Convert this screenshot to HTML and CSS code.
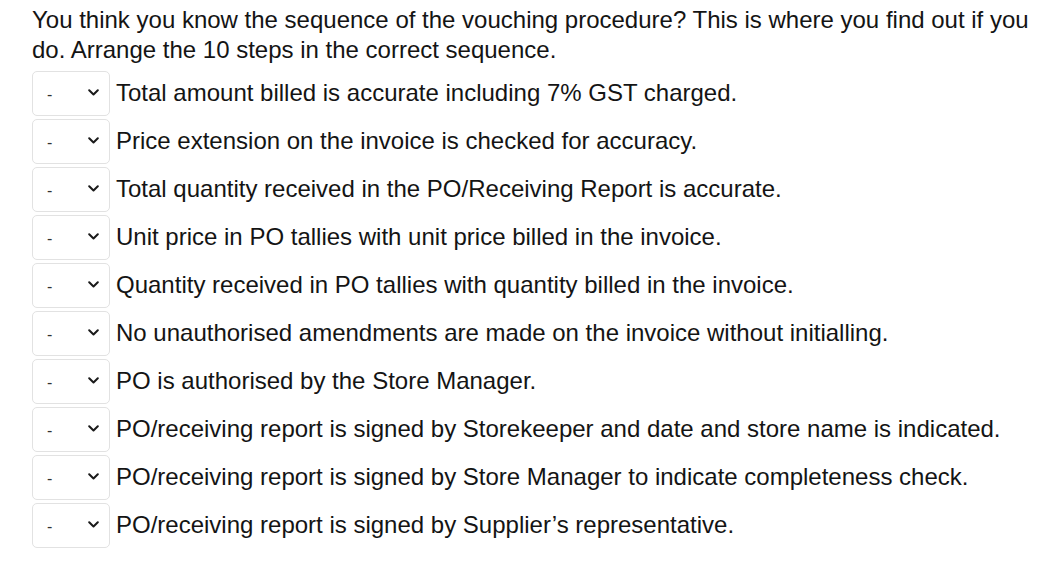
FILE: index.html
```html
<!DOCTYPE html>
<html>
<head>
<meta charset="utf-8">
<link rel="stylesheet" href="styles.css">
</head>
<body>
<div class="quiz">
  <p class="intro">You think you know the sequence of the vouching procedure? This is where you find out if you do. Arrange the 10 steps in the correct sequence.</p>
  <ul class="steps">
    <li class="step"><span class="select"><span class="dash">-</span><svg class="chev" viewBox="0 0 11 7"><path d="M1.2 1.2 L5.5 5.5 L9.8 1.2"/></svg></span><span class="label">Total amount billed is accurate including 7% GST charged.</span></li>
    <li class="step"><span class="select"><span class="dash">-</span><svg class="chev" viewBox="0 0 11 7"><path d="M1.2 1.2 L5.5 5.5 L9.8 1.2"/></svg></span><span class="label">Price extension on the invoice is checked for accuracy.</span></li>
    <li class="step"><span class="select"><span class="dash">-</span><svg class="chev" viewBox="0 0 11 7"><path d="M1.2 1.2 L5.5 5.5 L9.8 1.2"/></svg></span><span class="label">Total quantity received in the PO/Receiving Report is accurate.</span></li>
    <li class="step"><span class="select"><span class="dash">-</span><svg class="chev" viewBox="0 0 11 7"><path d="M1.2 1.2 L5.5 5.5 L9.8 1.2"/></svg></span><span class="label">Unit price in PO tallies with unit price billed in the invoice.</span></li>
    <li class="step"><span class="select"><span class="dash">-</span><svg class="chev" viewBox="0 0 11 7"><path d="M1.2 1.2 L5.5 5.5 L9.8 1.2"/></svg></span><span class="label">Quantity received in PO tallies with quantity billed in the invoice.</span></li>
    <li class="step"><span class="select"><span class="dash">-</span><svg class="chev" viewBox="0 0 11 7"><path d="M1.2 1.2 L5.5 5.5 L9.8 1.2"/></svg></span><span class="label">No unauthorised amendments are made on the invoice without initialling.</span></li>
    <li class="step"><span class="select"><span class="dash">-</span><svg class="chev" viewBox="0 0 11 7"><path d="M1.2 1.2 L5.5 5.5 L9.8 1.2"/></svg></span><span class="label">PO is authorised by the Store Manager.</span></li>
    <li class="step"><span class="select"><span class="dash">-</span><svg class="chev" viewBox="0 0 11 7"><path d="M1.2 1.2 L5.5 5.5 L9.8 1.2"/></svg></span><span class="label">PO/receiving report is signed by Storekeeper and date and store name is indicated.</span></li>
    <li class="step"><span class="select"><span class="dash">-</span><svg class="chev" viewBox="0 0 11 7"><path d="M1.2 1.2 L5.5 5.5 L9.8 1.2"/></svg></span><span class="label">PO/receiving report is signed by Store Manager to indicate completeness check.</span></li>
    <li class="step"><span class="select"><span class="dash">-</span><svg class="chev" viewBox="0 0 11 7"><path d="M1.2 1.2 L5.5 5.5 L9.8 1.2"/></svg></span><span class="label">PO/receiving report is signed by Supplier’s representative.</span></li>
  </ul>
</div>
</body>
</html>
```
FILE: styles.css
```css
html, body {
  margin: 0;
  padding: 0;
  background: #ffffff;
}
body {
  font-family: "Liberation Sans", Arial, sans-serif;
  color: #141414;
}
.quiz {
  padding: 5px 20px 0 32px;
}
.intro {
  margin: 0 0 6px 0;
  font-size: 24px;
  line-height: 30px;
}
.steps {
  list-style: none;
  margin: 0;
  padding: 0;
}
.step {
  display: flex;
  align-items: center;
  margin-bottom: 3px;
  font-size: 24px;
}
.select {
  box-sizing: border-box;
  width: 78px;
  height: 45px;
  border: 1px solid #e2e2e2;
  border-radius: 5px;
  display: flex;
  align-items: center;
  padding: 3px 10px 0 14px;
  margin-right: 6px;
  flex: none;
}
.dash {
  font-size: 16px;
  color: #333;
  flex: 1;
}
.chev {
  width: 11px;
  height: 7px;
  margin-top: -5px;
  fill: none;
  stroke: #1a1a1a;
  stroke-width: 2;
  stroke-linecap: round;
  stroke-linejoin: round;
}
.label {
  margin-top: -2px;
}
```
